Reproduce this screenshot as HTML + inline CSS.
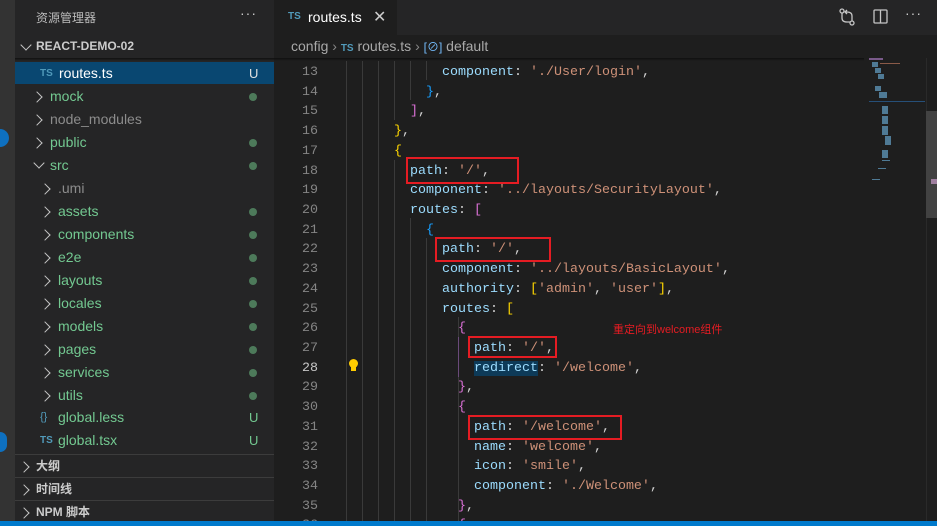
<!DOCTYPE html>
<html><head><meta charset="utf-8"><style>
*{margin:0;padding:0;box-sizing:border-box}
html,body{width:937px;height:526px;overflow:hidden}
body{background:#1e1e1e;position:relative;font-family:"Liberation Sans","Noto Sans CJK SC",sans-serif;}
.abs{position:absolute}
#act{left:0;top:0;width:15px;height:526px;background:#333333}
#side{left:15px;top:0;width:259px;height:521px;background:#252526}
.row{position:absolute;left:15px;width:259px;height:23px;font-size:14px;line-height:23px;color:#cccccc;white-space:nowrap}
.chev{position:absolute;width:8px;height:8px;border-right:1.3px solid #c5c5c5;border-bottom:1.3px solid #c5c5c5}
.r{transform:rotate(-45deg)}
.d{transform:rotate(45deg)}
.g{color:#73c991}
.dot{position:absolute;left:234px;top:8px;width:8px;height:8px;border-radius:50%;background:#4d7a5a}
.u{position:absolute;left:234px;font-size:13px;color:#73c991}
.ts{color:#519aba;font-size:10px;font-weight:bold;position:absolute}
.code{position:absolute;left:330px;font-family:"Liberation Mono",monospace;font-size:13.33px;white-space:pre;color:#d4d4d4;height:20px;line-height:20px}
.ln{position:absolute;left:280px;width:38px;text-align:right;font-family:"Liberation Mono",monospace;font-size:13.33px;color:#858585;height:20px;line-height:20px}
.p{color:#9cdcfe}.s{color:#ce9178}.y{color:#ffd700}.m{color:#da70d6}.b{color:#179fff}
.guide{position:absolute;width:1px;background:#3a3a3a}
.box{position:absolute;border:2px solid #e51c23}
.sec{position:absolute;left:15px;width:259px;height:23px;border-top:1px solid #3c3c3c;font-size:12px;font-weight:bold;color:#cccccc;line-height:22px}
#ed{position:absolute;left:0;top:2px;width:937px;height:519px}
</style></head><body>
<div id="act" class="abs"></div>
<div class="abs" style="left:0;top:129px;width:9px;height:18px;border-radius:0 9px 9px 0;background:#0e70c0"></div>
<div class="abs" style="left:0;top:432px;width:7px;height:20px;border-radius:0 9px 9px 0;background:#0e70c0"></div>
<div id="side" class="abs"></div>
<div class="abs" style="left:36px;top:9px;font-size:12px;color:#bbbbbb">资源管理器</div>
<div class="abs" style="left:240px;top:5px;font-size:14px;color:#cccccc;letter-spacing:1px">···</div>
<div class="row" style="top:35px;font-size:12px;font-weight:bold"><span class="chev d" style="left:7px;top:6px"></span><span style="position:absolute;left:21px">REACT-DEMO-02</span></div>
<div class="abs" style="left:15px;top:58px;width:259px;height:3px;background:linear-gradient(#111,#252526)"></div>
<div class="row" style="top:62px;background:#094771;height:22px"><span class="ts" style="left:25px;top:0">TS</span><span style="position:absolute;left:44px;color:#fff">routes.ts</span><span class="u" style="color:#e0e0e0">U</span></div>
<div class="row g" style="top:85px"><span class="chev r" style="left:18px;top:8px"></span><span style="position:absolute;left:35px">mock</span><span class="dot"></span></div>
<div class="row" style="top:108px;color:#8c8c8c"><span class="chev r" style="left:18px;top:8px"></span><span style="position:absolute;left:35px">node_modules</span></div>
<div class="row g" style="top:131px"><span class="chev r" style="left:18px;top:8px"></span><span style="position:absolute;left:35px">public</span><span class="dot"></span></div>
<div class="row g" style="top:154px"><span class="chev d" style="left:20px;top:5px"></span><span style="position:absolute;left:35px">src</span><span class="dot"></span></div>
<div class="row" style="top:177px;color:#8c8c8c"><span class="chev r" style="left:26px;top:8px"></span><span style="position:absolute;left:43px">.umi</span></div>
<div class="row g" style="top:200px"><span class="chev r" style="left:26px;top:8px"></span><span style="position:absolute;left:43px">assets</span><span class="dot"></span></div>
<div class="row g" style="top:223px"><span class="chev r" style="left:26px;top:8px"></span><span style="position:absolute;left:43px">components</span><span class="dot"></span></div>
<div class="row g" style="top:246px"><span class="chev r" style="left:26px;top:8px"></span><span style="position:absolute;left:43px">e2e</span><span class="dot"></span></div>
<div class="row g" style="top:269px"><span class="chev r" style="left:26px;top:8px"></span><span style="position:absolute;left:43px">layouts</span><span class="dot"></span></div>
<div class="row g" style="top:292px"><span class="chev r" style="left:26px;top:8px"></span><span style="position:absolute;left:43px">locales</span><span class="dot"></span></div>
<div class="row g" style="top:315px"><span class="chev r" style="left:26px;top:8px"></span><span style="position:absolute;left:43px">models</span><span class="dot"></span></div>
<div class="row g" style="top:338px"><span class="chev r" style="left:26px;top:8px"></span><span style="position:absolute;left:43px">pages</span><span class="dot"></span></div>
<div class="row g" style="top:361px"><span class="chev r" style="left:26px;top:8px"></span><span style="position:absolute;left:43px">services</span><span class="dot"></span></div>
<div class="row g" style="top:384px"><span class="chev r" style="left:26px;top:8px"></span><span style="position:absolute;left:43px">utils</span><span class="dot"></span></div>
<div class="row g" style="top:406px"><span style="position:absolute;left:25px;color:#519aba;font-size:11px">{}</span><span style="position:absolute;left:43px">global.less</span><span class="u">U</span></div>
<div class="row g" style="top:429px"><span class="ts" style="left:25px">TS</span><span style="position:absolute;left:43px">global.tsx</span><span class="u">U</span></div>
<div class="sec" style="top:454px"><span class="chev r" style="left:5px;top:8px"></span><span style="position:absolute;left:21px">大纲</span></div>
<div class="sec" style="top:477px"><span class="chev r" style="left:5px;top:8px"></span><span style="position:absolute;left:21px">时间线</span></div>
<div class="sec" style="top:500px"><span class="chev r" style="left:5px;top:8px"></span><span style="position:absolute;left:21px">NPM 脚本</span></div>

<div class="abs" style="left:274px;top:0;width:663px;height:35px;background:#252526"></div>
<div class="abs" style="left:274px;top:0;width:123px;height:35px;background:#1e1e1e"></div>
<span class="ts" style="left:288px;top:11px">TS</span>
<div class="abs" style="left:308px;top:9px;font-size:14px;color:#ffffff">routes.ts</div>
<div class="abs" style="left:373px;top:7px;font-size:16px;color:#cccccc">✕</div>
<svg class="abs" style="left:838px;top:8px" width="18" height="18" viewBox="0 0 18 18" fill="none" stroke="#c5c5c5" stroke-width="1.3"><circle cx="4" cy="3" r="2"/><circle cx="14" cy="15" r="2"/><path d="M4 5v5M4 10c0 3 2 4 5 4h3M14 13V8c0-3-2-4-5-4H7M9 2L7 4l2 2"/></svg>
<svg class="abs" style="left:873px;top:9px" width="15" height="15" viewBox="0 0 15 15" fill="none" stroke="#c5c5c5" stroke-width="1.3"><rect x="1" y="1" width="13" height="13" rx="1"/><path d="M7.5 1v13"/></svg>
<div class="abs" style="left:905px;top:5px;font-size:14px;color:#cccccc;letter-spacing:1px">···</div>
<div class="abs" style="left:291px;top:38px;font-size:14px;color:#a9a9a9;white-space:nowrap">config <span style="color:#888">›</span> <span style="color:#519aba;font-size:10px;font-weight:bold">TS</span> routes.ts <span style="color:#888">›</span> <span style="color:#75beff;font-size:12px">[⊘]</span> default</div>

<div id="ed">
<div class="guide" style="left:346px;top:58px;height:461px"></div>
<div class="guide" style="left:362px;top:58px;height:461px"></div>
<div class="guide" style="left:378px;top:58px;height:461px"></div>
<div class="guide" style="left:394px;top:58px;height:60px"></div>
<div class="guide" style="left:394px;top:158px;height:361px"></div>
<div class="guide" style="left:410px;top:58px;height:40px"></div>
<div class="guide" style="left:410px;top:216px;height:303px"></div>
<div class="guide" style="left:426px;top:58px;height:20px"></div>
<div class="guide" style="left:426px;top:236px;height:283px"></div>
<div class="guide" style="left:458px;top:315px;height:204px"></div>
<div class="guide" style="left:458px;top:335px;height:40px;background:#6a4a7a"></div>

<div class="ln" style="top:61px">13</div>
<div class="ln" style="top:81px">14</div>
<div class="ln" style="top:100px">15</div>
<div class="ln" style="top:120px">16</div>
<div class="ln" style="top:140px">17</div>
<div class="ln" style="top:160px">18</div>
<div class="ln" style="top:179px">19</div>
<div class="ln" style="top:199px">20</div>
<div class="ln" style="top:219px">21</div>
<div class="ln" style="top:238px">22</div>
<div class="ln" style="top:258px">23</div>
<div class="ln" style="top:278px">24</div>
<div class="ln" style="top:298px">25</div>
<div class="ln" style="top:317px">26</div>
<div class="ln" style="top:337px">27</div>
<div class="ln" style="top:357px;color:#c6c6c6">28</div>
<div class="ln" style="top:376px">29</div>
<div class="ln" style="top:396px">30</div>
<div class="ln" style="top:416px">31</div>
<div class="ln" style="top:436px">32</div>
<div class="ln" style="top:455px">33</div>
<div class="ln" style="top:475px">34</div>
<div class="ln" style="top:495px">35</div>
<div class="ln" style="top:514px">36</div>

<div class="code" style="top:61px">              <span class="p">component</span>: <span class="s">'./User/login'</span>,</div>
<div class="code" style="top:81px">            <span class="b">}</span>,</div>
<div class="code" style="top:100px">          <span class="m">]</span>,</div>
<div class="code" style="top:120px">        <span class="y">}</span>,</div>
<div class="code" style="top:140px">        <span class="y">{</span></div>
<div class="code" style="top:160px">          <span class="p">path</span>: <span class="s">'/'</span>,</div>
<div class="code" style="top:179px">          <span class="p">component</span>: <span class="s">'../layouts/SecurityLayout'</span>,</div>
<div class="code" style="top:199px">          <span class="p">routes</span>: <span class="m">[</span></div>
<div class="code" style="top:219px">            <span class="b">{</span></div>
<div class="code" style="top:238px">              <span class="p">path</span>: <span class="s">'/'</span>,</div>
<div class="code" style="top:258px">              <span class="p">component</span>: <span class="s">'../layouts/BasicLayout'</span>,</div>
<div class="code" style="top:278px">              <span class="p">authority</span>: <span class="y">[</span><span class="s">'admin'</span>, <span class="s">'user'</span><span class="y">]</span>,</div>
<div class="code" style="top:298px">              <span class="p">routes</span>: <span class="y">[</span></div>
<div class="code" style="top:317px">                <span class="m">{</span></div>
<div class="code" style="top:337px">                  <span class="p">path</span>: <span class="s">'/'</span>,</div>
<div class="code" style="top:357px">                  <span class="p" style="background:#0d3a58">redirect</span>: <span class="s">'/welcome'</span>,</div>
<div class="code" style="top:376px">                <span class="m">}</span>,</div>
<div class="code" style="top:396px">                <span class="m">{</span></div>
<div class="code" style="top:416px">                  <span class="p">path</span>: <span class="s">'/welcome'</span>,</div>
<div class="code" style="top:436px">                  <span class="p">name</span>: <span class="s">'welcome'</span>,</div>
<div class="code" style="top:455px">                  <span class="p">icon</span>: <span class="s">'smile'</span>,</div>
<div class="code" style="top:475px">                  <span class="p">component</span>: <span class="s">'./Welcome'</span>,</div>
<div class="code" style="top:495px">                <span class="m">}</span>,</div>
<div class="code" style="top:514px">                <span class="m">{</span></div>

<div class="abs" style="left:349px;top:357px;width:9px;height:9px;border-radius:50%;background:#ffcc00"></div>
<div class="abs" style="left:351px;top:365px;width:5px;height:4px;background:#ffcc00"></div>
</div>

<div class="abs" style="left:274px;top:58px;width:590px;height:3px;background:linear-gradient(#101010,#1e1e1e)"></div>

<div class="box" style="left:406px;top:157px;width:113px;height:27px"></div>
<div class="box" style="left:435px;top:237px;width:116px;height:25px"></div>
<div class="box" style="left:468px;top:336px;width:89px;height:22px"></div>
<div class="box" style="left:468px;top:415px;width:154px;height:25px"></div>
<div class="abs" style="left:613px;top:321px;font-size:11px;color:#e51c23;white-space:nowrap">重定向到welcome组件</div>

<div class="abs" style="left:869px;top:58px;width:14px;height:2px;background:#7a5a8a"></div>
<div class="abs" style="left:872px;top:62px;width:6px;height:5px;background:#4f7a95"></div>
<div class="abs" style="left:880px;top:63px;width:20px;height:1px;background:#8a5a48"></div>
<div class="abs" style="left:875px;top:68px;width:6px;height:5px;background:#4f7a95"></div>
<div class="abs" style="left:878px;top:74px;width:6px;height:5px;background:#4f7a95"></div>
<div class="abs" style="left:875px;top:86px;width:6px;height:5px;background:#4f7a95"></div>
<div class="abs" style="left:879px;top:92px;width:8px;height:6px;background:#4f7a95"></div>
<div class="abs" style="left:869px;top:101px;width:56px;height:1px;background:#264f78"></div>
<div class="abs" style="left:882px;top:106px;width:6px;height:8px;background:#4f7a95"></div>
<div class="abs" style="left:882px;top:116px;width:6px;height:8px;background:#4f7a95"></div>
<div class="abs" style="left:882px;top:126px;width:6px;height:9px;background:#4f7a95"></div>
<div class="abs" style="left:885px;top:136px;width:6px;height:9px;background:#4f7a95"></div>
<div class="abs" style="left:882px;top:150px;width:6px;height:8px;background:#4f7a95"></div>
<div class="abs" style="left:882px;top:160px;width:8px;height:1px;background:#4f7a95"></div>
<div class="abs" style="left:878px;top:168px;width:8px;height:1px;background:#4f7a95"></div>
<div class="abs" style="left:872px;top:179px;width:8px;height:1px;background:#4f7a95"></div>
<div class="abs" style="left:926px;top:58px;width:1px;height:463px;background:#2a2a2a"></div>
<div class="abs" style="left:926px;top:111px;width:11px;height:107px;background:#424242"></div>
<div class="abs" style="left:931px;top:179px;width:6px;height:5px;background:#a080a0"></div>
<div class="abs" style="left:0;top:521px;width:937px;height:5px;background:#007acc"></div>
</body></html>
